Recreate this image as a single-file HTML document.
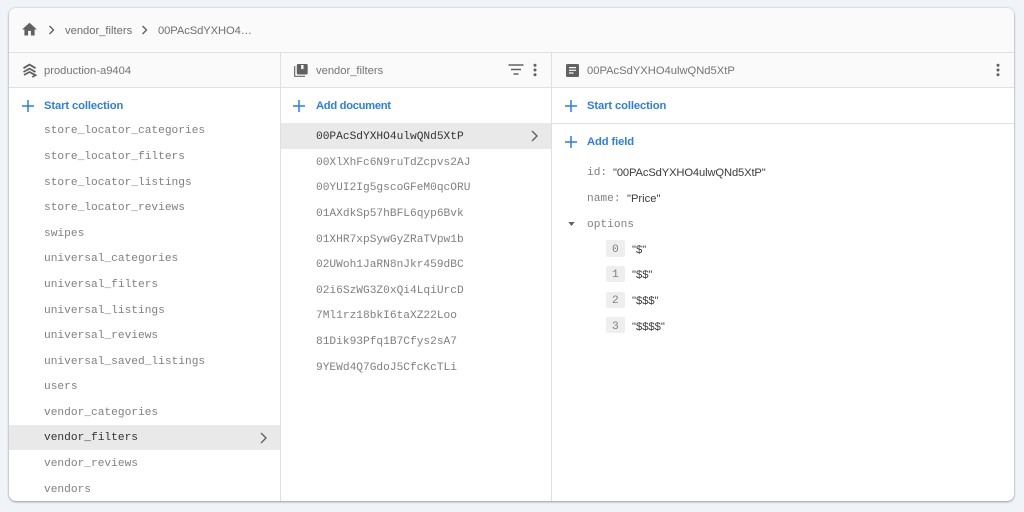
<!DOCTYPE html>
<html><head><meta charset="utf-8"><style>
html,body{margin:0;padding:0;width:1024px;height:512px;overflow:hidden;background:#f0f4f8;font-family:"Liberation Sans",sans-serif}
#wrap{position:absolute;left:0;top:0;width:1024px;height:512px;filter:blur(.35px)}
#card{position:absolute;left:9px;top:8px;width:1005px;height:493px;background:#fff;border-radius:7px;box-shadow:0 1px 2px rgba(60,64,67,.45),0 0 2px rgba(60,64,67,.2);overflow:hidden}
.a{position:absolute}
.t{position:absolute;white-space:nowrap;line-height:16px}
.s{font-size:11.2px;color:#6f6f6f}
.h{font-size:11.2px;color:#757575}
.b{font-size:11.2px;color:#2b7de9;font-weight:bold;letter-spacing:-.1px}
.m{font-family:"Liberation Mono",monospace;font-size:11.2px;color:#808080}
.d{color:#333}
.v{font-size:11.2px;color:#3c3c3c}
svg{position:absolute;overflow:visible}
</style></head><body><div id="wrap">
<div id="card">
<div class="a" style="left:0;top:0;width:1005px;height:79px;background:#fafafa"></div>
<div class="a" style="left:0;top:44px;width:1005px;height:1px;background:#e0e0e0"></div>
<div class="a" style="left:0;top:79px;width:1005px;height:1px;background:#e0e0e0"></div>
<div class="a" style="left:271px;top:45px;width:1px;height:448px;background:#e0e0e0"></div>
<div class="a" style="left:542px;top:45px;width:1px;height:448px;background:#e0e0e0"></div>
<div class="a" style="left:543px;top:115px;width:462px;height:1px;background:#e0e0e0"></div>
<div class="a" style="left:0;top:417px;width:271px;height:25px;background:#e9e9e9"></div>
<div class="a" style="left:272px;top:115px;width:270px;height:26px;background:#e9e9e9"></div>
</div>

<!-- home -->
<svg style="left:21px;top:21px" width="17" height="17" viewBox="0 0 24 24"><path fill="#616161" d="M10 20.5v-6.5h4v6.5h5.2v-8.5h3.3L12 2.5 1.5 12h3.3v8.5z"/></svg>
<svg style="left:47px;top:25px" width="10" height="10" viewBox="0 0 10 10"><path fill="none" stroke="#616161" stroke-width="1.4" d="M2.5 1l4 4-4 4"/></svg>
<div class="t s" style="left:65px;top:23px">vendor_filters</div>
<svg style="left:140px;top:25px" width="10" height="10" viewBox="0 0 10 10"><path fill="none" stroke="#616161" stroke-width="1.4" d="M2.5 1l4 4-4 4"/></svg>
<div class="t s" style="left:158px;top:23px;letter-spacing:-.08px">00PAcSdYXHO4…</div>

<!-- stack -->
<svg style="left:22px;top:63px" width="15" height="15" viewBox="0 0 15 15"><path fill="none" stroke="#616161" stroke-width="1.8" d="M1.5 5.2L7.5 1.6l6 3.6M1.5 9L7.5 5.6l6 3.4M2 12l5.5-3 6 3.2-3.2 1.8"/></svg>
<div class="t h" style="left:44px;top:63px">production-a9404</div>
<!-- collection -->
<svg style="left:293px;top:63px" width="15" height="15" viewBox="0 0 15 15"><path fill="#757575" d="M1 3h1.3v9.7H12V14H2.3A1.3 1.3 0 0 1 1 12.7z"/><path fill="#616161" fill-rule="evenodd" d="M5 1h8.5A1.2 1.2 0 0 1 14.7 2.2v8.1a1.2 1.2 0 0 1-1.2 1.2H5a1.2 1.2 0 0 1-1.2-1.2V2.2A1.2 1.2 0 0 1 5 1zm5.5 1v4.5l-1.2-.9-1.2.9V2z"/></svg>
<div class="t h" style="left:316px;top:63px">vendor_filters</div>
<!-- filter -->
<svg style="left:508px;top:64px" width="16" height="12" viewBox="0 0 16 12"><path fill="none" stroke="#616161" stroke-width="1.5" d="M.5 1h15M3 5.5h10M5.5 10h5"/></svg>
<svg style="left:533px;top:63px" width="4" height="14" viewBox="0 0 4 14"><circle cx="2" cy="2.2" r="1.5" fill="#616161"/><circle cx="2" cy="7" r="1.5" fill="#616161"/><circle cx="2" cy="11.8" r="1.5" fill="#616161"/></svg>
<!-- doc -->
<svg style="left:566px;top:64px" width="13" height="13" viewBox="0 0 13 13"><rect width="13" height="13" rx="1.5" fill="#616161"/><path fill="none" stroke="#fafafa" stroke-width="1.2" d="M3 3.6h7M3 6.3h7M3 9h4.5"/></svg>
<div class="t h" style="left:587px;top:63px">00PAcSdYXHO4ulwQNd5XtP</div>
<svg style="left:996px;top:63px" width="4" height="14" viewBox="0 0 4 14"><circle cx="2" cy="2.2" r="1.5" fill="#616161"/><circle cx="2" cy="7" r="1.5" fill="#616161"/><circle cx="2" cy="11.8" r="1.5" fill="#616161"/></svg>

<!-- plus buttons -->
<svg style="left:22px;top:99.5px" width="12" height="12" viewBox="0 0 12 12"><path stroke="#2b7de9" stroke-width="1.5" d="M6 0v12M0 6h12"/></svg>
<div class="t b" style="left:44px;top:98px">Start collection</div>
<svg style="left:293px;top:99.5px" width="12" height="12" viewBox="0 0 12 12"><path stroke="#2b7de9" stroke-width="1.5" d="M6 0v12M0 6h12"/></svg>
<div class="t b" style="left:316px;top:98px;letter-spacing:-.3px">Add document</div>
<svg style="left:565px;top:99.5px" width="12" height="12" viewBox="0 0 12 12"><path stroke="#2b7de9" stroke-width="1.5" d="M6 0v12M0 6h12"/></svg>
<div class="t b" style="left:587px;top:98px">Start collection</div>
<svg style="left:565px;top:135.5px" width="12" height="12" viewBox="0 0 12 12"><path stroke="#2b7de9" stroke-width="1.5" d="M6 0v12M0 6h12"/></svg>
<div class="t b" style="left:587px;top:134px">Add field</div>

<!-- col 1 -->
<div class="t m" style="left:44px;top:123px">store_locator_categories</div>
<div class="t m" style="left:44px;top:149px">store_locator_filters</div>
<div class="t m" style="left:44px;top:175px">store_locator_listings</div>
<div class="t m" style="left:44px;top:200px">store_locator_reviews</div>
<div class="t m" style="left:44px;top:226px">swipes</div>
<div class="t m" style="left:44px;top:251px">universal_categories</div>
<div class="t m" style="left:44px;top:277px">universal_filters</div>
<div class="t m" style="left:44px;top:303px">universal_listings</div>
<div class="t m" style="left:44px;top:328px">universal_reviews</div>
<div class="t m" style="left:44px;top:354px">universal_saved_listings</div>
<div class="t m" style="left:44px;top:379px">users</div>
<div class="t m" style="left:44px;top:405px">vendor_categories</div>
<div class="t m d" style="left:44px;top:430px">vendor_filters</div>
<div class="t m" style="left:44px;top:456px">vendor_reviews</div>
<div class="t m" style="left:44px;top:482px">vendors</div>
<svg style="left:259px;top:432px" width="10" height="12" viewBox="0 0 10 12"><path fill="none" stroke="#616161" stroke-width="1.4" d="M2 1l5 5-5 5"/></svg>

<!-- col 2 -->
<div class="t m d" style="left:316px;top:129px">00PAcSdYXHO4ulwQNd5XtP</div>
<div class="t m" style="left:316px;top:155px">00XlXhFc6N9ruTdZcpvs2AJ</div>
<div class="t m" style="left:316px;top:180px">00YUI2Ig5gscoGFeM0qcORU</div>
<div class="t m" style="left:316px;top:206px">01AXdkSp57hBFL6qyp6Bvk</div>
<div class="t m" style="left:316px;top:232px">01XHR7xpSywGyZRaTVpw1b</div>
<div class="t m" style="left:316px;top:257px">02UWoh1JaRN8nJkr459dBC</div>
<div class="t m" style="left:316px;top:283px">02i6SzWG3Z0xQi4LqiUrcD</div>
<div class="t m" style="left:316px;top:308px">7Ml1rz18bkI6taXZ22Loo</div>
<div class="t m" style="left:316px;top:334px">81Dik93Pfq1B7Cfys2sA7</div>
<div class="t m" style="left:316px;top:360px">9YEWd4Q7GdoJ5CfcKcTLi</div>
<svg style="left:530px;top:130px" width="10" height="12" viewBox="0 0 10 12"><path fill="none" stroke="#616161" stroke-width="1.4" d="M2 1l5 5-5 5"/></svg>

<!-- col 3 -->
<div class="t m" style="left:587px;top:165px">id:</div>
<div class="t v" style="left:613px;top:165px;letter-spacing:-.13px">"00PAcSdYXHO4ulwQNd5XtP"</div>
<div class="t m" style="left:587px;top:191px">name:</div>
<div class="t v" style="left:627px;top:191px">"Price"</div>
<svg style="left:568px;top:222px" width="7" height="4" viewBox="0 0 8 5"><path fill="#616161" d="M0 0h8L4 5z"/></svg>
<div class="t m" style="left:587px;top:217px">options</div>

<div class="a" style="left:606px;top:240px;width:19px;height:17px;background:#eee;border-radius:2px"></div>
<div class="t m" style="left:612px;top:242px">0</div>
<div class="t v" style="left:632px;top:242px">"$"</div>
<div class="a" style="left:606px;top:266px;width:19px;height:16px;background:#eee;border-radius:2px"></div>
<div class="t m" style="left:612px;top:267px">1</div>
<div class="t v" style="left:632px;top:267px">"$$"</div>
<div class="a" style="left:606px;top:292px;width:19px;height:16px;background:#eee;border-radius:2px"></div>
<div class="t m" style="left:612px;top:293px">2</div>
<div class="t v" style="left:632px;top:293px">"$$$"</div>
<div class="a" style="left:606px;top:317px;width:19px;height:16px;background:#eee;border-radius:2px"></div>
<div class="t m" style="left:612px;top:319px">3</div>
<div class="t v" style="left:632px;top:319px">"$$$$"</div>
</div></body></html>
